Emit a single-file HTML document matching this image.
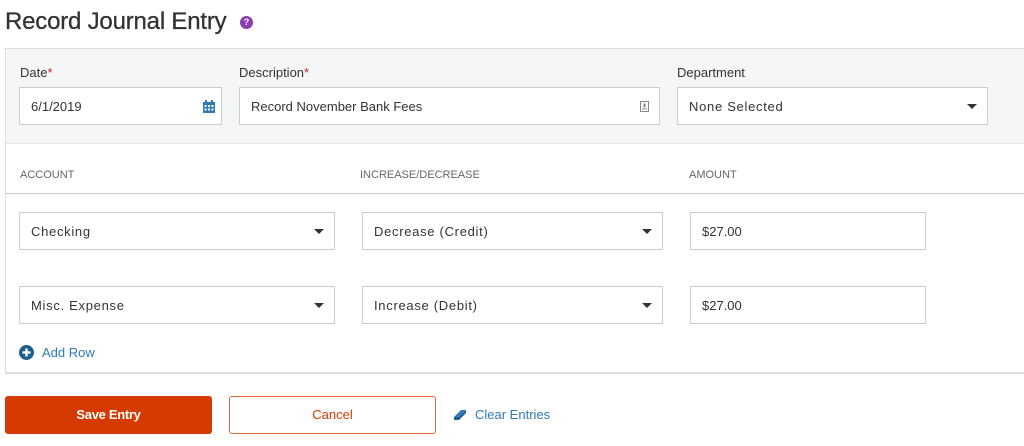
<!DOCTYPE html>
<html><head><style>
*{box-sizing:border-box;margin:0;padding:0}
body{width:1024px;height:446px;background:#fff;font-family:"Liberation Sans",sans-serif;position:relative;overflow:hidden;color:#333}
.a{position:absolute}
h1{position:absolute;left:5px;top:8px;font-size:24px;font-weight:normal;color:#333;letter-spacing:-0.2px;-webkit-text-stroke:0.3px #333}
.q{position:absolute;left:240px;top:16px;width:13px;height:13px;border-radius:50%;background:#8a3fb0;color:#fff;font-size:9px;font-weight:bold;text-align:center;line-height:13px}
.panel{position:absolute;left:5px;top:48px;width:1030px;height:326px;border:1px solid #ddd;border-bottom:2px solid #ddd}
.top{position:absolute;left:0;top:0;right:0;height:95px;background:#f5f6f7;border-bottom:1px solid #e6e6e6}
.lbl{position:absolute;font-size:13px;color:#333}
.lbl b{color:#c0272d;font-weight:normal}
.inp{position:absolute;background:#fff;border:1px solid #ccc;font-size:13px;color:#333;padding-left:11px;display:flex;align-items:center}
.sel{letter-spacing:0.7px}
.caret{position:absolute;right:10px;top:50%;margin-top:-2px;width:0;height:0;border-left:5px solid transparent;border-right:5px solid transparent;border-top:5px solid #333}
.th{position:absolute;top:169px;font-size:11px;color:#666}
</style></head><body>
<h1>Record Journal Entry</h1>
<div class="q">?</div>
<div class="panel"><div class="top"></div></div>
<div class="lbl" style="left:20px;top:65px">Date<b>*</b></div>
<div class="lbl" style="left:239px;top:65px">Description<b>*</b></div>
<div class="lbl" style="left:677px;top:65px">Department</div>
<div class="inp" style="left:19px;top:87px;width:203px;height:38px">6/1/2019
<svg class="a" style="right:6px;top:12px" width="12" height="13" viewBox="0 0 12 13"><rect x="0" y="2" width="12" height="11" fill="#2e7bb4"/><rect x="2" y="0" width="2" height="3" fill="#2e7bb4"/><rect x="8" y="0" width="2" height="3" fill="#2e7bb4"/><g fill="#fff"><rect x="1.5" y="5" width="2" height="2"/><rect x="5" y="5" width="2" height="2"/><rect x="8.5" y="5" width="2" height="2"/><rect x="1.5" y="8.5" width="2" height="2"/><rect x="5" y="8.5" width="2" height="2"/><rect x="8.5" y="8.5" width="2" height="2"/></g></svg></div>
<div class="inp" style="left:239px;top:87px;width:421px;height:38px">Record November Bank Fees
<svg class="a" style="right:10px;top:13px" width="9" height="11" viewBox="0 0 9 11"><rect x="0.5" y="0.5" width="8" height="10" fill="none" stroke="#888"/><rect x="3.5" y="2.5" width="2" height="4" fill="#888"/><rect x="2" y="7.5" width="5" height="1" fill="#888"/></svg></div>
<div class="inp sel" style="left:677px;top:87px;width:311px;height:38px">None Selected<span class="caret"></span></div>
<div class="th" style="left:20px">ACCOUNT</div>
<div class="th" style="left:360px">INCREASE/DECREASE</div>
<div class="th" style="left:689px">AMOUNT</div>
<div class="a" style="left:5px;top:193px;width:1019px;height:1px;background:#ccc"></div>
<div class="inp sel" style="left:19px;top:212px;width:316px;height:38px">Checking<span class="caret"></span></div>
<div class="inp sel" style="left:362px;top:212px;width:301px;height:38px">Decrease (Credit)<span class="caret"></span></div>
<div class="inp" style="left:690px;top:212px;width:236px;height:38px">$27.00</div>
<div class="inp sel" style="left:19px;top:286px;width:316px;height:38px">Misc. Expense<span class="caret"></span></div>
<div class="inp sel" style="left:362px;top:286px;width:301px;height:38px">Increase (Debit)<span class="caret"></span></div>
<div class="inp" style="left:690px;top:286px;width:236px;height:38px">$27.00</div>
<svg class="a" style="left:19px;top:345px" width="15" height="15" viewBox="0 0 15 15"><circle cx="7.5" cy="7.5" r="7.5" fill="#1f5f8f"/><rect x="6.3" y="3.5" width="2.4" height="8" fill="#fff"/><rect x="3.5" y="6.3" width="8" height="2.4" fill="#fff"/></svg>
<div class="a" style="left:42px;top:345px;font-size:13px;color:#2e7bb4">Add Row</div>
<div class="a" style="left:5px;top:396px;width:207px;height:38px;background:#d53a00;border-radius:3px;color:#fff;font-size:13px;font-weight:bold;text-align:center;line-height:38px;letter-spacing:-0.3px">Save Entry</div>
<div class="a" style="left:229px;top:396px;width:207px;height:38px;border:1px solid #e0663a;border-radius:3px;color:#d53a00;font-size:13px;text-align:center;line-height:36px">Cancel</div>
<svg class="a" style="left:453px;top:408px" width="15" height="13" viewBox="0 0 15 13"><path d="M1 9 L8 2 L13 2 L6 9 Z" fill="#2e7bb4"/><path d="M1 9 L6 9 L6 12 L1 12 Z" fill="#1f5f8f"/><path d="M6 9 L13 2 L13 5 L6 12 Z" fill="#1f5f8f"/></svg>
<div class="a" style="left:475px;top:407px;font-size:13px;color:#2e7bb4">Clear Entries</div>
</body></html>
